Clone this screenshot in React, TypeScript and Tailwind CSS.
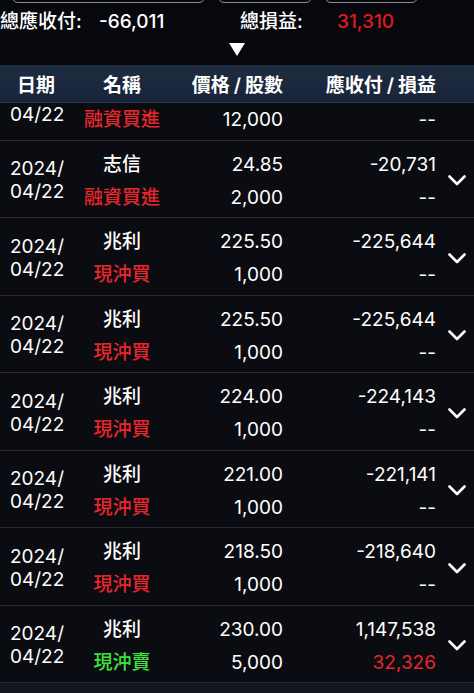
import React from "react";

type Row = {
  name: string;
  type: string;
  typeColor: string;
  price: string;
  qty: string;
  amt: string;
  pl: string;
  plRed?: boolean;
};

const rows: Row[] = [
  { name: "志信", type: "融資買進", typeColor: "text-[#e8262b]", price: "24.85", qty: "12,000", amt: "-248,352", pl: "--" },
  { name: "志信", type: "融資買進", typeColor: "text-[#e8262b]", price: "24.85", qty: "2,000", amt: "-20,731", pl: "--" },
  { name: "兆利", type: "現沖買", typeColor: "text-[#e8262b]", price: "225.50", qty: "1,000", amt: "-225,644", pl: "--" },
  { name: "兆利", type: "現沖買", typeColor: "text-[#e8262b]", price: "225.50", qty: "1,000", amt: "-225,644", pl: "--" },
  { name: "兆利", type: "現沖買", typeColor: "text-[#e8262b]", price: "224.00", qty: "1,000", amt: "-224,143", pl: "--" },
  { name: "兆利", type: "現沖買", typeColor: "text-[#e8262b]", price: "221.00", qty: "1,000", amt: "-221,141", pl: "--" },
  { name: "兆利", type: "現沖買", typeColor: "text-[#e8262b]", price: "218.50", qty: "1,000", amt: "-218,640", pl: "--" },
  { name: "兆利", type: "現沖賣", typeColor: "text-[#3ee23a]", price: "230.00", qty: "5,000", amt: "1,147,538", pl: "32,326", plRed: true },
];

const font = { fontFamily: "Inter, 'Noto Sans CJK TC', 'Noto Sans', sans-serif" };

function Chevron() {
  return (
    <svg width="18" height="11" viewBox="0 0 18 11" fill="none">
      <polyline points="1.5,1.5 9,9 16.5,1.5" stroke="white" strokeWidth="2.6" strokeLinecap="round" strokeLinejoin="round" />
    </svg>
  );
}

function DataRow({ r, first }: { r: Row; first: boolean }) {
  const top = (s: string) => (first ? "\u00a0" : s);
  return (
    <div className="flex h-[77.5px] border-b border-[#262932] bg-[#0b0c11] text-white text-[19px] leading-[23px]">
      <div className="w-[74px] pl-[10px] flex flex-col justify-center pt-[3px]">
        <div>{top("2024/")}</div>
        <div>04/22</div>
      </div>
      <div className="w-[96px] flex flex-col items-center justify-center gap-[10px] pt-[4px] font-medium">
        <div>{top(r.name)}</div>
        <div className={r.typeColor}>{r.type}</div>
      </div>
      <div className="w-[113px] flex flex-col items-end justify-center gap-[10px] pt-[4px]">
        <div>{top(r.price)}</div>
        <div>{r.qty}</div>
      </div>
      <div className="w-[153px] flex flex-col items-end justify-center gap-[10px] pt-[4px]">
        <div>{top(r.amt)}</div>
        <div className={r.plRed ? "text-[#e8262b]" : ""}>{r.pl}</div>
      </div>
      <div className="flex-1 flex items-center justify-center pl-[3px] pt-[4px]">
        {!first && <Chevron />}
      </div>
    </div>
  );
}

export default function App() {
  return (
    <div className="w-[474px] h-[693px] overflow-hidden bg-[#06080e] text-white flex flex-col" style={font}>
      <div className="flex pl-[12px] gap-[13px] mt-[-17px]">
        <div className="w-[193px] h-[20px] border border-[#8d8f94] rounded-[6px]" />
        <div className="w-[94px] h-[20px] border border-[#8d8f94] rounded-[6px]" />
        <div className="w-[93px] h-[20px] border border-[#8d8f94] rounded-[6px]" />
      </div>
      <div className="h-[34px] flex items-center text-[19px] pt-[5px] font-medium">
        <div className="w-[99px]">總應收付:</div>
        <div className="w-[141px]">-66,011</div>
        <div className="w-[97px]">總損益:</div>
        <div className="text-[#e0191f]">31,310</div>
      </div>
      <div className="h-[28px] flex items-center justify-center pb-[2px]">
        <svg width="16" height="14" viewBox="0 0 16 14">
          <polygon points="0,0 16,0 8,13" fill="white" />
        </svg>
      </div>
      <div className="relative z-10 h-[38px] flex items-center text-[19px] font-semibold pt-[5px] bg-gradient-to-b from-[#1e2c40] to-[#18243a] border-b border-[#2c3a50]">
        <div className="w-[74px] text-center pr-[2px]">日期</div>
        <div className="w-[96px] text-center">名稱</div>
        <div className="w-[113px] flex justify-end">
          <span>價格</span>
          <span className="mx-[4px]">/</span>
          <span>股數</span>
        </div>
        <div className="w-[153px] flex justify-end">
          <span>應收付</span>
          <span className="mx-[4px]">/</span>
          <span>損益</span>
        </div>
      </div>
      <div className="flex-1 overflow-hidden bg-[#12151c]">
        <div className="mt-[-40px]">
          {rows.map((r, i) => (
            <DataRow key={i} r={r} first={i === 0} />
          ))}
        </div>
      </div>
    </div>
  );
}
